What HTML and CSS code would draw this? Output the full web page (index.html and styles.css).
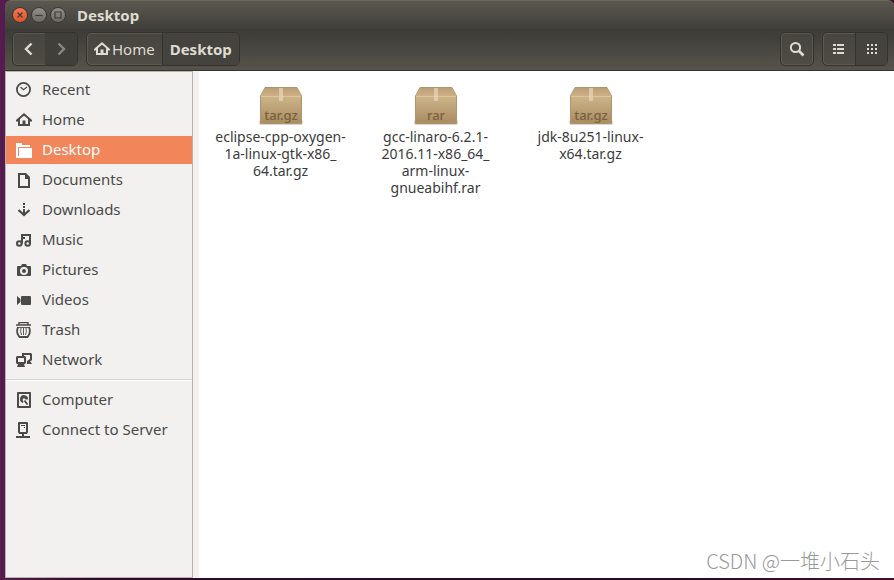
FILE: index.html
```html
<!DOCTYPE html>
<html lang="en">
<head>
<meta charset="utf-8">
<title>Desktop</title>
<link rel="stylesheet" href="styles.css">
</head>
<body>
<svg class="defs" aria-hidden="true">
  <defs>
    <linearGradient id="box-front" x1="0" y1="0" x2="0" y2="1"><stop offset="0" stop-color="#d8c096"/><stop offset="1" stop-color="#a98c61"/></linearGradient>
    <linearGradient id="box-top" x1="0" y1="0" x2="0" y2="1"><stop offset="0" stop-color="#bb9e78"/><stop offset="1" stop-color="#cfb086"/></linearGradient>
    <g id="package">
      <rect x="2" y="34" width="44" height="5" rx="2" fill="#000" opacity=".16"/>
      <path d="M8 1.500H40L44.500 10V37.500H3.500V10Z" fill="url(#box-front)" stroke="#b1946a"/>
      <path d="M8.500 2H39.500L44 10H4Z" fill="url(#box-top)"/>
      <path d="M4 10.500H44" stroke="#dcc59b"/>
      <path d="M22 2H26V15H22Z" fill="#eadcc2" opacity=".65"/>
    </g>
    <path id="house" d="M8 0 16 7V8.500H14V13H2V8.500H0V7ZM8 2.700 4 6.100V11H6.500V7.500H9.500V11H12V6.100Z" fill="currentColor" fill-rule="evenodd"/>
  </defs>
</svg>
<div class="window">
  <header class="titlebar">
    <button class="dot close" aria-label="Close"><svg viewBox="0 0 14 14"><path d="M4.500 4.500 9.500 9.500M9.500 4.500 4.500 9.500"/></svg></button>
    <button class="dot" aria-label="Minimize"><svg viewBox="0 0 14 14"><path d="M3.500 7.500H10.500"/></svg></button>
    <button class="dot" aria-label="Maximize"><svg viewBox="0 0 14 14"><path d="M4 4H10V10H4Z"/></svg></button>
    <h1>Desktop</h1>
  </header>
  <nav class="toolbar" aria-label="Toolbar">
    <div class="group">
      <button class="tool" aria-label="Back"><svg width="16" height="16" viewBox="0 0 16 16"><path d="M10.500 2.500 5 8 10.500 13.500" fill="none" stroke="currentColor" stroke-width="2.400"/></svg></button>
      <button class="tool dim" aria-label="Forward" disabled><svg width="16" height="16" viewBox="0 0 16 16"><path d="M5.500 2.500 11 8 5.500 13.500" fill="none" stroke="currentColor" stroke-width="2.400"/></svg></button>
    </div>
    <div class="group path">
      <button class="crumb"><svg width="16" height="14" viewBox="0 0 16 14"><use href="#house"/></svg>Home</button>
      <button class="crumb active">Desktop</button>
    </div>
    <div class="group search">
      <button class="tool" aria-label="Search"><svg width="16" height="16" viewBox="0 0 16 16" fill="none" stroke="currentColor"><circle cx="6.500" cy="6.500" r="4.600" stroke-width="2"/><path d="M10 10 14.500 14.500" stroke-width="2.600"/></svg></button>
    </div>
    <div class="group">
      <button class="tool" aria-label="List view"><svg width="16" height="16" viewBox="0 0 16 16"><path d="M2 3H5V5H2ZM6 3H13V5H6ZM2 7H5V9H2ZM6 7H13V9H6ZM2 11H5V13H2ZM6 11H13V13H6Z" fill="currentColor"/></svg></button>
      <button class="tool active" aria-label="Icon view"><svg width="16" height="16" viewBox="0 0 16 16"><path d="M3 3H5V5H3ZM7 3H9V5H7ZM11 3H13V5H11ZM3 7H5V9H3ZM7 7H9V9H7ZM11 7H13V9H11ZM3 11H5V13H3ZM7 11H9V13H7ZM11 11H13V13H11Z" fill="currentColor"/></svg></button>
    </div>
  </nav>
  <div class="content">
    <nav class="sidebar" aria-label="Places">
      <a href="#recent"><svg viewBox="0 0 16 16"><circle cx="7.500" cy="7.500" r="6.600" fill="none" stroke="currentColor" stroke-width="1.800"/><path d="M4.500 5 7.500 7.700 11 5" fill="none" stroke="currentColor" stroke-width="1.200"/></svg>Recent</a>
      <a href="#home"><svg viewBox="0 0 16 16"><use href="#house" y="1"/></svg>Home</a>
      <a href="#desktop" class="selected"><svg viewBox="0 0 16 16"><path d="M0 1H6V3H14V5H2V14H0ZM3 6H16V16H3ZM0 14H3V16H0Z" fill="currentColor"/></svg>Desktop</a>
      <a href="#documents"><svg viewBox="0 0 16 16"><path d="M2 1H10L14 5V16H2ZM4 3V14H12V7H9V3Z" fill="currentColor" fill-rule="evenodd"/></svg>Documents</a>
      <a href="#downloads"><svg viewBox="0 0 16 16"><path d="M7 1H9V3H7ZM7 4H9V6H7ZM7 7H9V12H7Z" fill="currentColor"/><path d="M2.500 8 8 13 13.500 8" fill="none" stroke="currentColor" stroke-width="2.200"/></svg>Downloads</a>
      <a href="#music"><svg viewBox="0 0 16 16" fill="none" stroke="currentColor" stroke-width="2"><circle cx="3.300" cy="11.500" r="2.300"/><circle cx="11.700" cy="11.500" r="2.300"/><path d="M6 11.500V3H14V11.500M6 6H9"/></svg>Music</a>
      <a href="#pictures"><svg viewBox="0 0 16 16"><path d="M6 2H10L11 4H14Q15 4 15 5V13Q15 14 14 14H2Q1 14 1 13V5Q1 4 2 4H5ZM8 5A4 4 0 1 0 8 13A4 4 0 1 0 8 5ZM8 7A2 2 0 1 1 8 11A2 2 0 1 1 8 7Z" fill="currentColor" fill-rule="evenodd"/></svg>Pictures</a>
      <a href="#videos"><svg viewBox="0 0 16 16"><path d="M1 4 4.500 7V10L1 13ZM6 4H14Q15 4 15 5V12Q15 13 14 13H6Q5 13 5 12V5Q5 4 6 4Z" fill="currentColor"/></svg>Videos</a>
      <a href="#trash"><svg viewBox="0 0 16 16" fill="none" stroke="currentColor"><path d="M0 3H15M3 2.500V.5H12V2.500" stroke-width="1.400"/><path d="M2 5Q0 10 2.500 13.500L3.500 15H11.500L12.500 13.500Q15 10 13 5" stroke-width="1.800"/><path d="M5 6Q4 9.500 5.500 13M7.500 6V13M10 6Q11 9.500 9.500 13M2 5.500H13" stroke-width=".9"/></svg>Trash</a>
      <a href="#network"><svg viewBox="0 0 16 16"><path d="M1 4H9L10 5V11L9 12H8L9 15H1L2 12H1L0 11V5ZM2 6V10H8V6ZM6 1H15L16 2V8L15 9H14L16 12H11V9L14 7V3H8V4H6Z" fill="currentColor" fill-rule="evenodd"/></svg>Network</a>
      <hr>
      <a href="#computer"><svg viewBox="0 0 16 16"><path d="M2 0H14Q15 0 15 1V15Q15 16 14 16H2Q1 16 1 15V1Q1 0 2 0ZM3 2V14H13V2Z" fill="currentColor" fill-rule="evenodd"/><path d="M7 11A4 4 0 1 1 12 7.500L9.500 7.500A1.500 1.500 0 1 0 7.500 9.200Z" fill="currentColor"/><path d="M8.500 8.500 11.500 12.500" stroke="currentColor" stroke-width="1.800"/></svg>Computer</a>
      <a href="#server"><svg viewBox="0 0 16 16"><path d="M3 0H11Q12 0 12 1V10L11 12H8V14H14V16H0V14H6V12H3L2 10V1Q2 0 3 0ZM4 2V10H10V2ZM5 3H9V4H5ZM8 5H9V6H8Z" fill="currentColor" fill-rule="evenodd"/></svg>Connect to Server</a>
    </nav>
    <main class="files">
      <figure><svg width="48" height="40" viewBox="0 0 48 40"><use href="#package"/><text x="24" y="34">tar.gz</text></svg><figcaption>eclipse-cpp-oxygen-<br>1a-linux-gtk-x86_<br>64.tar.gz</figcaption></figure>
      <figure><svg width="48" height="40" viewBox="0 0 48 40"><use href="#package"/><text x="24" y="34">rar</text></svg><figcaption>gcc-linaro-6.2.1-<br>2016.11-x86_64_<br>arm-linux-<br>gnueabihf.rar</figcaption></figure>
      <figure><svg width="48" height="40" viewBox="0 0 48 40"><use href="#package"/><text x="24" y="34">tar.gz</text></svg><figcaption>jdk-8u251-linux-<br>x64.tar.gz</figcaption></figure>
    </main>
  </div>
  <p class="watermark">CSDN @一堆小石头</p>
</div>
</body>
</html>
```
FILE: styles.css
```css
* {
  box-sizing: border-box;
}

body {
  margin: 0;
  height: 100vh;
  padding: 0 0 2px 5px;
  background: linear-gradient(90deg, #571b50, #300a2b 10%, #2b0824 75%, #42102c);
  color: #4a4a4a;
  font: 15px/18px "Noto Sans", "Noto Sans CJK SC", sans-serif;
}

.defs {
  position: absolute;
  width: 0;
  height: 0;
}

.window {
  position: relative;
  display: flex;
  flex-direction: column;
  height: 100%;
}

button {
  margin: 0;
  padding: 0;
  border: 0;
  background: none;
  color: #dfdbd2;
  font: inherit;
}

svg {
  display: block;
  flex: none;
}

.titlebar {
  display: flex;
  align-items: center;
  gap: 3px;
  height: 29px;
  padding-left: 7px;
  border-top: 1px solid #6a675e;
  border-radius: 6px 6px 0 0;
  background: linear-gradient(#5b5850, #403f3a);
  color: #dfdbd2;
}

.titlebar h1 {
  margin: 0 0 0 8px;
  font-size: 15px;
  font-weight: 700;
}

.dot {
  width: 16px;
  height: 16px;
  border: 1px solid #393833;
  border-radius: 50%;
  background: linear-gradient(#92908a, #6b6962);
}

.dot.close {
  background: linear-gradient(#f4784f, #e1532a);
}

.dot svg {
  width: 14px;
  height: 14px;
  fill: none;
  stroke: #3c3b37;
  stroke-width: 1.2;
}

.toolbar {
  display: flex;
  align-items: center;
  gap: 8px;
  height: 42px;
  padding: 0 6px 1px 7px;
  border-bottom: 1px solid #35342f;
  background: linear-gradient(#3c3b37, #55534b);
}

.group {
  display: flex;
  height: 34px;
  border: 1px solid #33322e;
  border-radius: 5px;
  background: linear-gradient(#46453f, #4e4c45);
  box-shadow: inset 0 0 0 1px #5b5950;
  overflow: hidden;
}

.search {
  margin-left: auto;
}

.tool {
  display: flex;
  align-items: center;
  justify-content: center;
  width: 32px;
}

.tool.dim {
  background: #403f3a;
  color: #8a877f;
}

.crumb {
  display: flex;
  align-items: center;
  gap: 2px;
  padding: 0 7px;
}

.crumb.active {
  font-weight: 700;
}

.active {
  border-left: 1px solid #33322e;
  background: #44433d;
}

.content {
  display: flex;
  flex: 1;
  min-height: 0;
  background: #f2f1f0;
}

.sidebar {
  display: flex;
  flex-direction: column;
  gap: 2px;
  width: 188px;
  padding-top: 4px;
  border: 1px solid #b8b4ad;
  background: #f2f1ef;
}

.sidebar a {
  display: flex;
  align-items: center;
  gap: 10px;
  height: 28px;
  padding: 0 0 2px 10px;
  color: inherit;
  text-decoration: none;
}

.sidebar svg {
  width: 16px;
  height: 16px;
  margin-top: 2px;
}

.sidebar .selected {
  background: #f28559;
  color: #fff;
}

.sidebar hr {
  width: 100%;
  height: 2px;
  margin: 3px 0;
  border: 0;
  border-top: 1px solid #d5d3d0;
  border-bottom: 1px solid #fff;
}

.files {
  display: flex;
  flex: 1;
  flex-wrap: wrap;
  align-content: flex-start;
  margin-left: 6px;
  padding: 15px 0 0 4px;
  background: #fff;
  color: #3c3c3c;
}

.files figure {
  display: flex;
  flex-direction: column;
  align-items: center;
  width: 155px;
  margin: 0;
}

.files figcaption {
  margin-top: 2px;
  font-size: 14px;
  line-height: 17px;
  text-align: center;
}

.files text {
  fill: #77613f;
  font-family: "Noto Sans", sans-serif;
  font-size: 13px;
  font-weight: 500;
  text-anchor: middle;
}

.watermark {
  position: absolute;
  right: 14px;
  bottom: 4px;
  margin: 0;
  color: #999;
  font: 300 20px/26px "Noto Sans CJK SC", sans-serif;
}
```
